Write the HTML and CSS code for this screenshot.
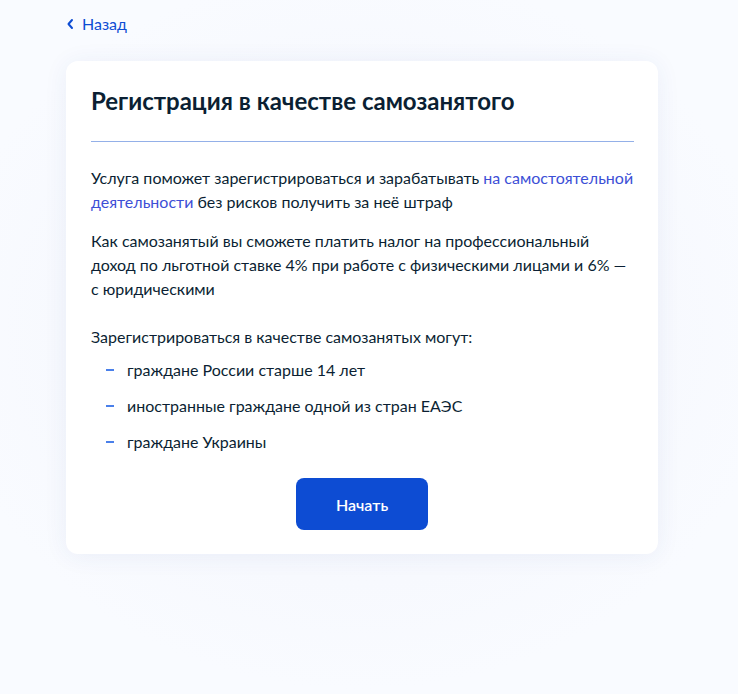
FILE: index.html
```html
<!DOCTYPE html>
<html lang="ru">
<head>
<meta charset="utf-8">
<link rel="stylesheet" href="styles.css">
</head>
<body>
<div class="page">
  <a class="back" href="#">
    <svg class="back-icon" width="8" height="12" viewBox="0 0 8 12"><path d="M6 2 L2.5 6 L6 10" fill="none" stroke="#0d4cd3" stroke-width="2" stroke-linecap="round" stroke-linejoin="round"/></svg>
    <span>Назад</span>
  </a>
  <div class="card">
    <h1 class="title">Регистрация в качестве самозанятого</h1>
    <div class="divider"></div>
    <p class="text text-first">Услуга поможет зарегистрироваться и зарабатывать <a class="link" href="#">на самостоятельной деятельности</a> без рисков получить за неё штраф</p>
    <p class="text">Как самозанятый вы сможете платить налог на профессиональный доход по льготной ставке 4% при работе с физическими лицами и 6% — с юридическими</p>
    <p class="text text-list-head">Зарегистрироваться в качестве самозанятых могут:</p>
    <ul class="list">
      <li>граждане России старше 14 лет</li>
      <li>иностранные граждане одной из стран ЕАЭС</li>
      <li>граждане Украины</li>
    </ul>
    <div class="actions">
      <button class="btn">Начать</button>
    </div>
  </div>
</div>
</body>
</html>
```

FILE: styles.css
```css
html, body {
  margin: 0;
  padding: 0;
}
body {
  width: 738px;
  height: 694px;
  overflow: hidden;
  background: radial-gradient(ellipse 420px 360px at 360px 330px, #f3f5fc 0%, #f7f9fe 70%, #f9fbff 100%);
  font-family: Lato, "Noto Sans", sans-serif;
  color: #0b1f33;
}
.page {
  padding: 12px 0 0 66px;
  width: 592px;
}
.back {
  display: inline-flex;
  align-items: center;
  gap: 8px;
  color: #0d4cd3;
  text-decoration: none;
  font-size: 16px;
  line-height: 24px;
}
.back-icon {
  display: block;
}
.card {
  margin-top: 25px;
  background: #fff;
  border-radius: 12px;
  box-shadow: 0 2px 24px rgba(40, 70, 160, 0.07);
  padding: 24px 24px 24px 25px;
}
.title {
  margin: 0;
  font-size: 24px;
  line-height: 32px;
  font-weight: 700;
}
.divider {
  height: 1px;
  background: #94b0e8;
  margin: 24px 0 24px;
}
.text {
  margin: 0 0 16px;
  font-size: 16px;
  line-height: 24px;
  color: #0b1f33;
}
.text-first {
  margin-bottom: 15px;
}
.text-list-head {
  margin-top: 24px;
  margin-bottom: 9px;
}
.link {
  color: #3d4fd6;
  text-decoration: none;
}
.list {
  list-style: none;
  margin: 0;
  padding: 0;
  display: flex;
  flex-direction: column;
  gap: 12px;
}
.list li {
  display: flex;
  align-items: center;
  font-size: 16px;
  line-height: 24px;
}
.list li::before {
  content: "";
  width: 8px;
  height: 2px;
  background: #4a80ea;
  margin: 0 13px 0 15px;
  flex: none;
}
.actions {
  display: flex;
  justify-content: center;
  margin-top: 24px;
  margin-left: -1px;
}
.btn {
  width: 132px;
  height: 52px;
  border: none;
  border-radius: 8px;
  background: #0d4cd3;
  color: #fff;
  font-family: Lato, "Noto Sans", sans-serif;
  font-size: 16px;
  font-weight: 600;
  cursor: pointer;
}
```
